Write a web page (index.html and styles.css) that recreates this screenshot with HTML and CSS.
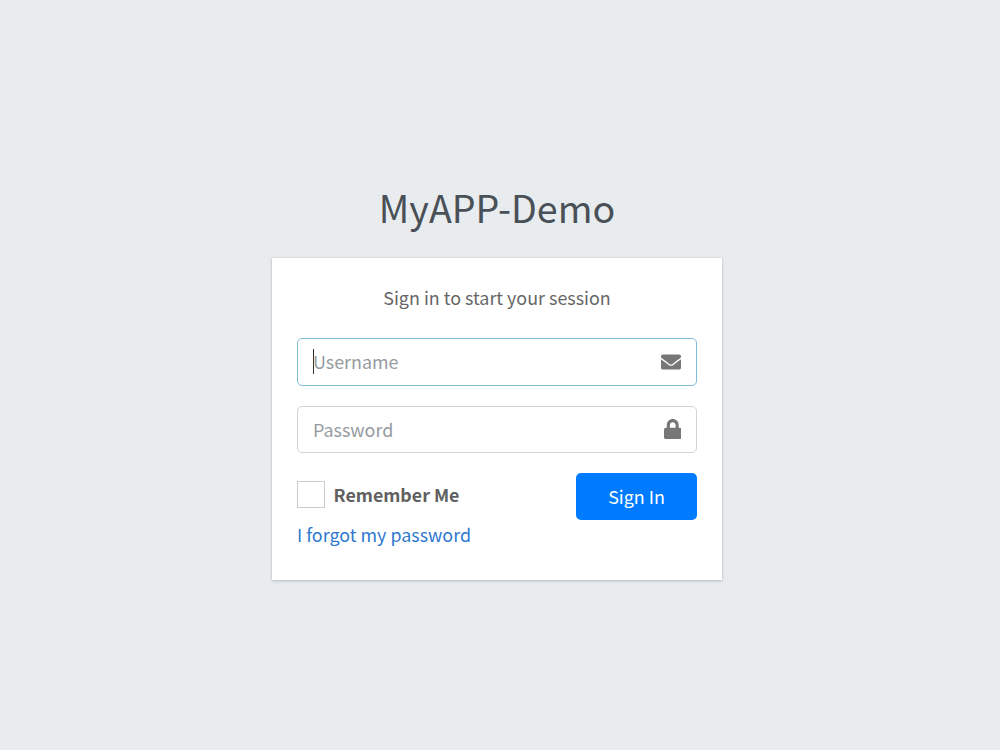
FILE: index.html
```html
<!DOCTYPE html>
<html lang="en">
<head>
    <meta charset="UTF-8">
    <meta name="viewport" content="width=device-width, initial-scale=1.0">
    <title>MyAPP-Demo</title>
    <link rel="stylesheet" href="styles.css">
</head>
<body class="login-page">
    <div class="login-box">
        <div class="login-logo">MyAPP-Demo</div>
        <div class="card">
            <p class="login-box-msg">Sign in to start your session</p>
            <form>
                <div class="input-group active">
                    <input type="text" class="form-control" placeholder="Username">
                    <span class="caret"></span>
                    <svg class="icon" width="20" height="20" viewBox="0 0 512 512"><path d="M502.3 190.8c3.9-3.1 9.7-.2 9.7 4.7V400c0 26.5-21.5 48-48 48H48c-26.5 0-48-21.5-48-48V195.6c0-5 5.7-7.8 9.7-4.7 22.4 17.4 52.1 39.5 154.1 113.6 21.1 15.4 56.7 47.8 92.2 47.6 35.7.3 72-32.8 92.3-47.6 102-74.1 131.6-96.3 154-113.7zM256 320c23.2.4 56.6-29.2 73.4-41.4 132.7-96.3 142.8-104.7 173.4-128.7 5.8-4.5 9.2-11.5 9.2-18.9v-19c0-26.5-21.5-48-48-48H48c-26.5 0-48 21.5-48 48v19c0 7.4 3.4 14.3 9.2 18.9 30.6 23.9 40.7 32.4 173.4 128.7 16.8 12.2 50.2 41.8 73.4 41.4z"/></svg>
                </div>
                <div class="input-group">
                    <input type="password" class="form-control" placeholder="Password">
                    <svg class="icon" width="17.5" height="20" viewBox="0 0 448 512"><path d="M400 224h-24v-72C376 68.2 307.8 0 224 0S72 68.2 72 152v72H48c-26.5 0-48 21.5-48 48v192c0 26.5 21.5 48 48 48h352c26.5 0 48-21.5 48-48V272c0-26.5-21.5-48-48-48zm-104 0H152v-72c0-39.7 32.3-72 72-72s72 32.3 72 72v72z"/></svg>
                </div>
                <div class="row">
                    <label class="remember">
                        <input type="checkbox" class="check">
                        Remember Me
                    </label>
                    <button type="button" class="btn">Sign In</button>
                </div>
            </form>
            <p class="forgot"><a href="#">I forgot my password</a></p>
        </div>
    </div>
</body>
</html>
```
FILE: styles.css
```css
* {
    box-sizing: border-box;
}
body {
    margin: 0;
    font-family: "Noto Sans CJK JP", "Noto Sans", sans-serif;
    font-size: 17.9px;
    line-height: 28px;
    color: #212529;
}
.login-page {
    display: flex;
    justify-content: center;
    height: 100vh;
    padding: 178px 6px 0 0;
    background-color: #e8ecef;
}
.login-box {
    width: 450px;
}
.login-logo {
    height: 62px;
    margin-bottom: 18px;
    font-size: 37.6px;
    line-height: 58px;
    text-align: center;
    color: #495057;
}
.card {
    height: 322px;
    padding: 25px;
    background-color: #fff;
    box-shadow: 0 0 1px rgba(0, 0, 0, 0.125), 0 1px 3px rgba(0, 0, 0, 0.2);
}
.login-box-msg {
    margin: 0 0 27px;
    text-align: center;
    color: #666;
}
.input-group {
    position: relative;
    display: flex;
    align-items: center;
    height: 47px;
    margin-bottom: 20px;
    padding: 0 15px 2px;
    border: 1px solid #ced4da;
    border-radius: 5px;
}
.input-group.active {
    height: 48px;
    border-color: #80bdda;
}
.form-control {
    flex: 1;
    min-width: 0;
    height: 30px;
    padding: 0;
    border: 0;
    outline: 0;
    background: none;
    font: inherit;
}
.form-control::placeholder {
    color: #959b9f;
}
.caret {
    position: absolute;
    left: 15px;
    top: 10px;
    width: 1px;
    height: 25px;
    background-color: #333;
}
.icon {
    fill: #777;
}
.active .icon {
    margin-top: 1px;
}
.row {
    display: flex;
    justify-content: space-between;
    align-items: flex-start;
    height: 47px;
}
.remember {
    display: flex;
    align-items: center;
    gap: 8.5px;
    margin-top: 7px;
    font-size: 17.8px;
    font-weight: 700;
    color: #606060;
}
.check {
    appearance: none;
    width: 28px;
    height: 27px;
    margin: 0;
    border: 1px solid #ccc;
}
.btn {
    width: 121px;
    height: 47px;
    padding: 0 0 2px;
    border: 0;
    border-radius: 5px;
    background-color: #007bff;
    color: #fff;
    font: inherit;
}
.forgot {
    margin: 0;
}
.forgot a {
    color: #2f78d0;
    text-decoration: none;
}
```
